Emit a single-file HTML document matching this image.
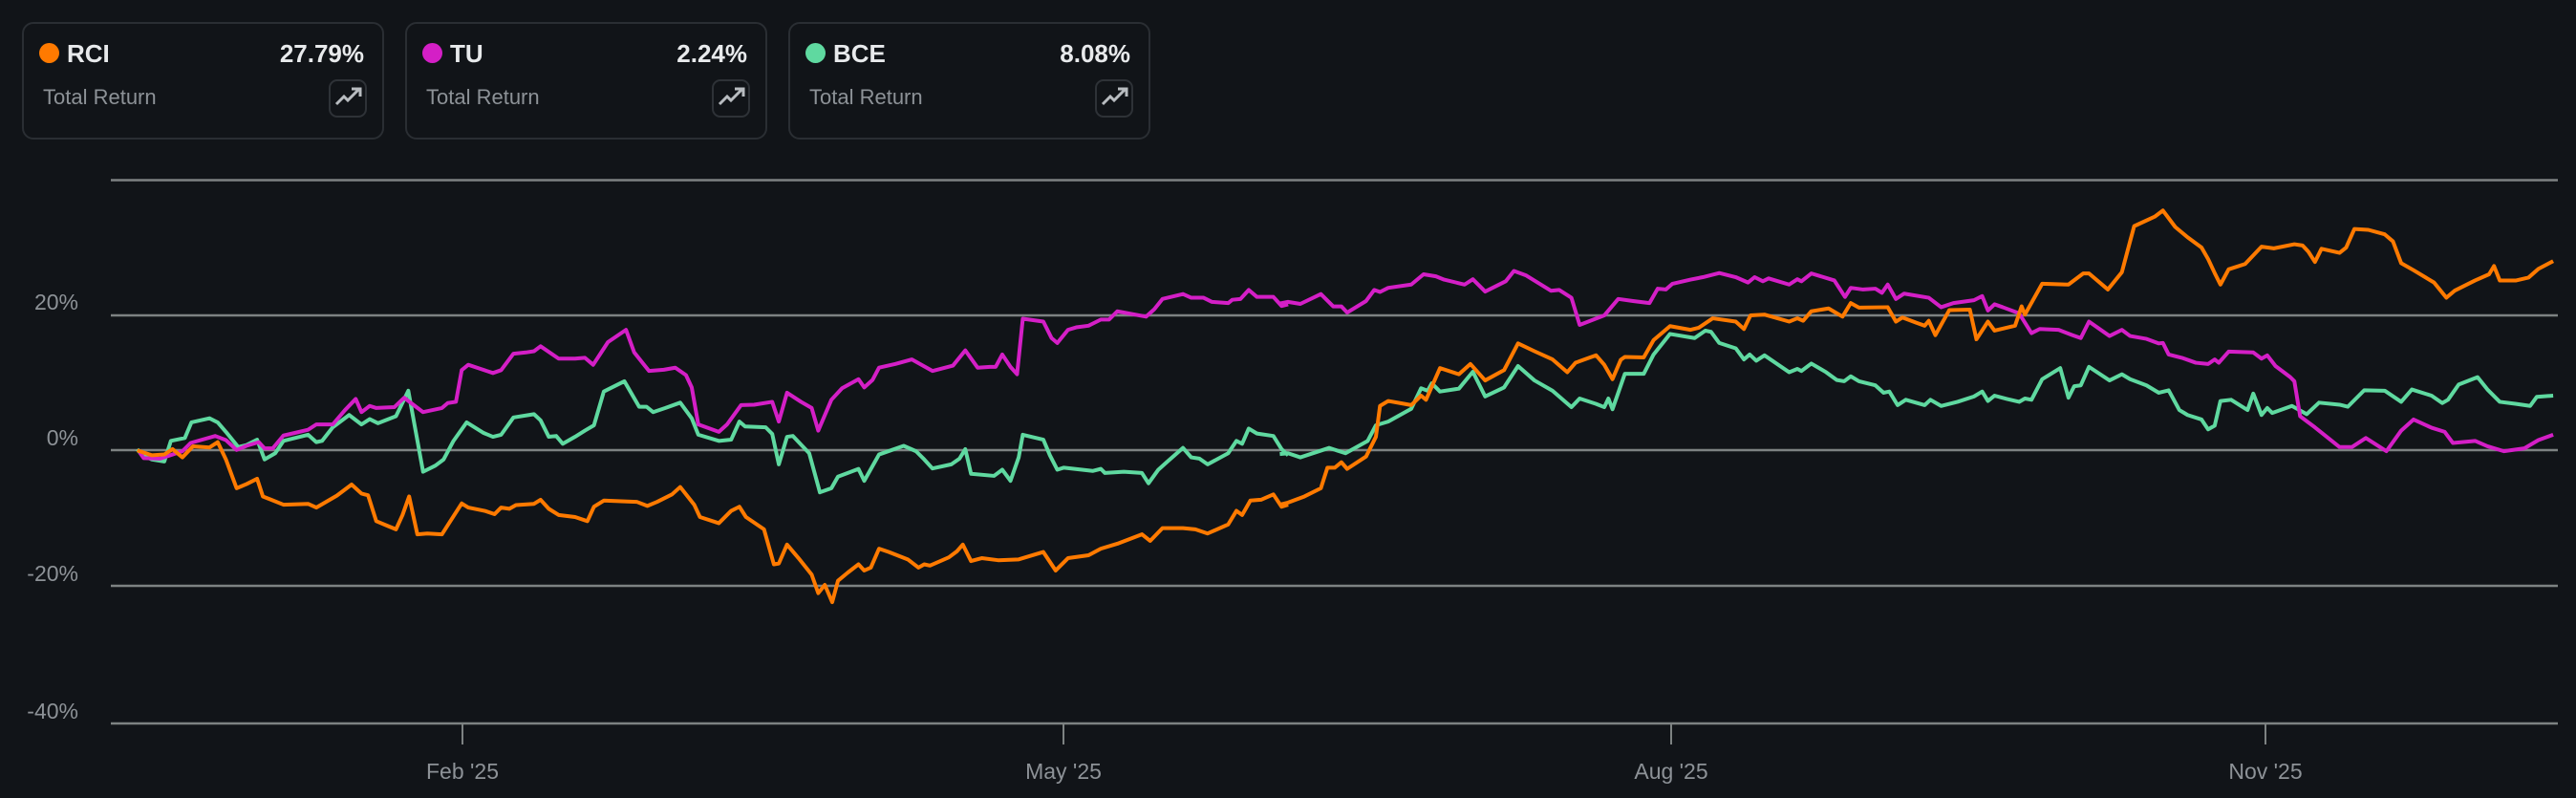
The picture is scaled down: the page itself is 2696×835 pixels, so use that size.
<!DOCTYPE html>
<html><head><meta charset="utf-8"><style>
html,body{margin:0;padding:0;background:#111418;width:2696px;height:835px;overflow:hidden;font-family:"Liberation Sans",sans-serif}
.card{position:absolute;top:23px;width:379px;height:123px;border:2px solid #2a2e33;border-radius:12px;box-sizing:border-box}
.dot{position:absolute;left:16px;top:20px;width:21px;height:21px;border-radius:50%}
.tk{position:absolute;left:45px;top:16px;font-size:26px;font-weight:bold;color:#e8eaec}
.pct{position:absolute;right:19px;top:16px;font-size:26px;font-weight:bold;color:#e8eaec}
.tr{position:absolute;left:20px;top:64px;font-size:22px;color:#8d9297}
.btn{position:absolute;left:319px;top:58px;width:40px;height:40px;border:2px solid #2e3237;border-radius:9px;box-sizing:border-box}
.btn svg{position:absolute;left:-2px;top:-2px}
.yl{position:absolute;right:2614px;font-size:23px;color:#8d9297}
.xl{position:absolute;top:794px;font-size:23px;color:#8d9297;transform:translateX(-50%)}
</style></head><body>
<div class="card" style="left:23px"><div class="dot" style="background:#ff7a00"></div><div class="tk">RCI</div><div class="pct">27.79%</div><div class="tr">Total Return</div><div class="btn"><svg width="40" height="40"><polyline points="8,26 16,18 20,22 31,11" fill="none" stroke="#b8bcc0" stroke-width="3"/><polyline points="24,10 33,10 33,18" fill="none" stroke="#b8bcc0" stroke-width="3"/></svg></div></div>
<div class="card" style="left:424px"><div class="dot" style="background:#d41fc6"></div><div class="tk">TU</div><div class="pct">2.24%</div><div class="tr">Total Return</div><div class="btn"><svg width="40" height="40"><polyline points="8,26 16,18 20,22 31,11" fill="none" stroke="#b8bcc0" stroke-width="3"/><polyline points="24,10 33,10 33,18" fill="none" stroke="#b8bcc0" stroke-width="3"/></svg></div></div>
<div class="card" style="left:825px"><div class="dot" style="background:#5fd9a0"></div><div class="tk">BCE</div><div class="pct">8.08%</div><div class="tr">Total Return</div><div class="btn"><svg width="40" height="40"><polyline points="8,26 16,18 20,22 31,11" fill="none" stroke="#b8bcc0" stroke-width="3"/><polyline points="24,10 33,10 33,18" fill="none" stroke="#b8bcc0" stroke-width="3"/></svg></div></div>

<div class="yl" style="top:303px">20%</div>
<div class="yl" style="top:445px">0%</div>
<div class="yl" style="top:587px">-20%</div>
<div class="yl" style="top:731px">-40%</div>
<div class="xl" style="left:484px">Feb '25</div>
<div class="xl" style="left:1113px">May '25</div>
<div class="xl" style="left:1749px">Aug '25</div>
<div class="xl" style="left:2371px">Nov '25</div>

<svg width="2696" height="835" style="position:absolute;left:0;top:0">
<g stroke="#7d8282" stroke-width="2.5">
<line x1="116" y1="188.5" x2="2677" y2="188.5"/>
<line x1="116" y1="330" x2="2677" y2="330"/>
<line x1="116" y1="471" x2="2677" y2="471"/>
<line x1="116" y1="613" x2="2677" y2="613"/>
<line x1="116" y1="757" x2="2677" y2="757"/>
<line x1="484" y1="757" x2="484" y2="779" stroke-width="2"/>
<line x1="1113" y1="757" x2="1113" y2="779" stroke-width="2"/>
<line x1="1749" y1="757" x2="1749" y2="779" stroke-width="2"/>
<line x1="2371" y1="757" x2="2371" y2="779" stroke-width="2"/>
</g>
<g fill="none" stroke-width="4" stroke-linejoin="round" vector-effect="non-scaling-stroke">
<g transform="translate(0,160) scale(0.8598,0.4305)">
<polyline vector-effect="non-scaling-stroke" stroke="#5fd9a0" stroke-width="4" points="167,720 173,735 185,745 200,750 208,700 225,693 233,655 255,645 265,655 275,678 290,715 300,710 313,697 322,745 335,730 345,700 375,685 385,703 392,700 405,667 425,637 440,660 450,647 460,657 482,640 497,578 515,775 530,760 540,745 552,700 568,655 588,680 600,690 610,685 625,643 650,635 658,650 668,690 677,688 685,707 700,690 712,675 723,662 735,580 760,555 778,617 787,617 795,630 810,620 828,607 842,645 850,685 875,700 890,697 900,653 907,665 932,667 940,683 948,757 958,690 965,688 985,730 998,825 1012,815 1020,787 1045,768 1052,797 1070,733 1100,712 1115,725 1125,745 1135,767 1158,757 1168,743 1175,720 1182,780 1210,785 1220,770 1230,797 1240,740 1245,685 1270,697 1278,735 1287,770 1295,765 1330,773 1340,768 1345,778 1368,775 1390,778 1398,803 1410,770 1420,752 1440,717 1450,740 1460,743 1470,757 1495,730 1505,700 1512,707 1520,670 1530,682 1550,688 1560,720 1568,735"/>
<polyline vector-effect="non-scaling-stroke" stroke="#d41fc6" stroke-width="4" points="170,728 175,742 195,743 210,733 222,725 232,705 262,688 275,698 288,722 300,712 315,703 322,718 332,718 345,687 360,680 375,673 385,660 405,660 420,625 433,598 440,630 450,615 458,620 480,618 492,595 505,615 515,630 538,620 545,608 555,605 562,528 570,515 585,525 600,535 610,528 625,488 640,485 650,482 658,470 680,500 700,500 712,498 722,515 740,460 762,430 772,485 790,530 808,527 822,522 835,540 842,570 850,660 875,678 885,660 902,613 918,612 940,605 948,653 958,583 975,605 988,620 996,675 1012,600 1025,572 1045,550 1052,570 1062,552 1070,522 1090,513 1110,502 1135,530 1160,517 1175,480 1190,522 1205,520 1212,520 1220,490 1230,520 1238,538 1245,403 1270,410 1280,450 1287,462 1300,430 1310,424 1325,420 1340,405 1350,405 1360,385 1395,398 1405,380 1415,355 1440,343 1450,352 1465,352 1475,362 1495,365 1500,357 1510,355 1520,333 1530,350 1550,350 1560,372 1568,368"/>
<polyline vector-effect="non-scaling-stroke" stroke="#ff7a00" stroke-width="4" points="167,723 185,735 200,733 210,720 222,740 235,713 255,716 265,703 275,745 288,815 300,805 313,792 320,835 330,843 345,855 375,853 385,862 410,833 428,806 440,828 448,832 458,895 470,905 482,915 490,880 498,835 508,927 520,925 538,927 545,905 562,852 570,862 590,870 602,878 610,862 620,865 628,856 650,853 658,843 668,865 680,880 700,885 715,895 723,860 735,845 760,847 775,848 788,858 800,848 818,830 828,812 845,855 852,885 875,900 890,870 900,860 908,885 930,915 942,1000 948,998 958,952 972,985 988,1025 996,1070 1004,1050 1013,1092 1020,1040 1032,1020 1045,1000 1052,1015 1060,1008 1070,962 1082,970 1105,988 1118,1008 1125,1000 1132,1003 1155,983 1165,968 1172,952 1182,992 1195,985 1215,990 1240,988 1270,970 1285,1015 1300,985 1325,978 1340,962 1360,950 1390,927 1400,943 1415,912 1440,912 1455,915 1470,925 1495,903 1505,870 1512,880 1522,845 1535,843 1550,830 1560,860 1568,855"/>
</g>
<g transform="translate(1348,160) scale(0.8598,0.4305)">
<polyline vector-effect="non-scaling-stroke" stroke="#5fd9a0" stroke-width="4" points="-10,732 0,730 15,740 50,717 70,730 97,700 107,662 122,653 150,622 162,572 170,578 175,560 185,580 208,573 225,532 240,592 263,570 280,518 300,553 322,578 345,618 355,597 375,610 385,618 390,597 395,623 410,537 433,537 445,490 465,440 495,450 508,432 515,435 525,462 545,475 555,502 562,490 570,505 580,492 610,533 620,525 625,530 637,512 655,533 668,552 677,555 685,543 695,555 715,565 725,583 732,580 742,613 752,600 775,613 782,600 795,615 815,605 835,592 845,580 852,603 860,590 875,598 890,605 897,597 905,600 918,550 940,523 950,595 957,567 965,565 975,520 1000,553 1015,538 1025,550 1045,565 1060,583 1072,577 1085,625 1095,637 1112,648 1120,672 1128,663 1135,603 1148,600 1168,625 1175,585 1185,637 1192,620 1198,632 1222,615 1240,635 1255,607 1280,612 1290,617 1310,577 1335,578 1355,605 1368,575 1392,590 1405,608 1412,600 1425,563 1448,545 1460,575 1475,605 1495,610 1512,615 1520,593 1540,590"/>
<polyline vector-effect="non-scaling-stroke" stroke="#d41fc6" stroke-width="4" points="-10,366 0,362 15,367 40,343 55,373 65,373 72,388 95,360 105,333 112,338 122,328 150,320 165,295 180,300 190,308 215,320 225,307 240,337 265,312 275,287 290,298 320,335 330,333 345,352 355,418 385,395 402,355 420,360 440,365 450,330 460,332 468,318 490,308 505,302 525,292 545,302 560,315 568,302 578,312 585,305 610,320 620,307 625,312 637,293 665,310 678,350 685,328 700,332 715,330 723,340 730,320 740,355 750,342 780,352 795,375 810,365 835,358 845,348 852,383 860,368 870,375 890,390 905,438 915,428 938,430 955,443 965,450 975,410 1000,445 1015,430 1025,445 1045,452 1060,463 1065,462 1072,490 1088,498 1105,510 1120,513 1128,502 1133,510 1145,483 1175,485 1185,500 1192,492 1202,518 1220,545 1225,555 1232,640 1250,667 1280,715 1295,715 1312,693 1337,725 1355,675 1370,648 1392,668 1408,678 1418,705 1445,700 1460,713 1480,725 1505,718 1522,698 1540,685"/>
<polyline vector-effect="non-scaling-stroke" stroke="#ff7a00" stroke-width="4" points="-10,855 0,850 20,835 40,815 48,765 57,765 65,752 72,768 95,738 107,690 112,615 122,603 150,613 162,590 168,600 185,523 208,538 222,513 240,553 263,528 280,463 300,482 322,502 340,533 350,510 375,492 385,515 395,550 405,503 410,496 433,497 445,455 465,421 490,430 500,425 517,402 545,410 555,428 563,395 580,393 610,410 620,402 627,408 637,385 658,378 675,398 685,365 695,376 730,375 740,410 748,400 765,413 775,420 780,408 788,443 805,382 830,381 838,453 852,410 860,432 885,420 893,373 897,393 918,318 950,320 968,293 975,293 998,332 1015,290 1025,215 1030,178 1055,155 1065,140 1080,180 1095,205 1112,230 1120,258 1128,292 1135,320 1145,283 1165,270 1185,228 1200,232 1225,222 1235,225 1242,240 1250,265 1258,233 1280,243 1288,230 1298,185 1315,187 1335,198 1345,215 1355,268 1370,285 1395,315 1410,352 1420,335 1445,310 1462,295 1468,275 1475,310 1495,310 1510,303 1522,282 1540,263"/>
</g>
</g>
</svg>
</body></html>
